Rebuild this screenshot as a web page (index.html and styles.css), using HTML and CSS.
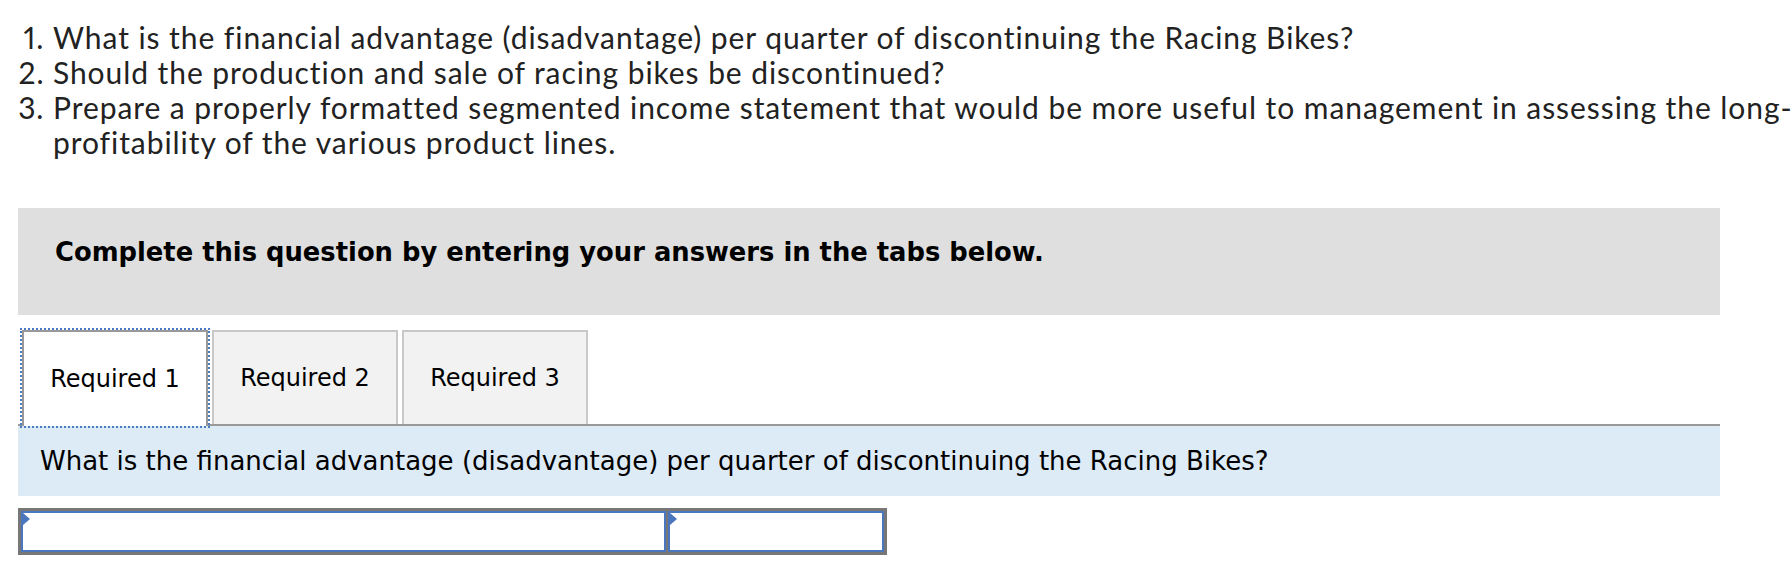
FILE: index.html
```html
<!DOCTYPE html>
<html>
<head>
<meta charset="utf-8">
<link rel="stylesheet" href="styles.css">
</head>
<body>
<ol class="questions">
  <li>What is the financial advantage (disadvantage) per quarter of discontinuing the Racing Bikes?</li>
  <li>Should the production and sale of racing bikes be discontinued?</li>
  <li>Prepare a properly formatted segmented income statement that would be more useful to management in assessing the long-term profitability of the various product lines.</li>
</ol>
<div class="instructions">Complete this question by entering your answers in the tabs below.</div>
<div class="tabs">
  <div class="tab active">Required 1</div>
  <div class="tab">Required 2</div>
  <div class="tab">Required 3</div>
</div>
<div class="prompt">What is the financial advantage (disadvantage) per quarter of discontinuing the Racing Bikes?</div>
<div class="answer">
  <div class="cell cell-label"></div>
  <div class="cell cell-value"></div>
</div>
</body>
</html>
```
FILE: styles.css
```css
html, body {
  margin: 0;
  padding: 0;
  background: #fff;
  overflow: hidden;
}
body {
  width: 1792px;
  height: 572px;
}
.questions {
  margin: 0;
  padding: 20px 0 0 53px;
  width: 1900px;
  font-family: Lato, "Liberation Sans", sans-serif;
  font-size: 30px;
  line-height: 35px;
  letter-spacing: 0.93px;
  font-variant-ligatures: none;
  color: #222;
}
.questions li::marker {
  font-variant-numeric: proportional-nums;
}
.instructions {
  margin: 48px 0 0 18px;
  width: 1702px;
  height: 107px;
  box-sizing: border-box;
  padding: 29px 0 0 37px;
  background: #dfdfdf;
  font-family: "DejaVu Sans", Verdana, sans-serif;
  font-weight: bold;
  font-size: 25.8px;
  line-height: 30px;
  color: #000;
}
.tabs {
  display: flex;
  gap: 4px;
  margin: 15px 0 0 18px;
  width: 1702px;
  box-sizing: border-box;
  padding-left: 4px;
  height: 96px;
  border-bottom: 2px solid #999;
  align-items: flex-end;
}
.tab {
  position: relative;
  width: 186px;
  height: 94px;
  box-sizing: border-box;
  border: 2px solid #c8c8c8;
  border-bottom: none;
  background: #f2f2f2;
  display: flex;
  align-items: center;
  justify-content: center;
  font-family: "DejaVu Sans", Verdana, sans-serif;
  font-size: 24px;
  color: #000;
}
.tab.active {
  background: #fff;
  border-color: #999;
  height: 96px;
  margin-bottom: -2px;
}
.tab.active::after {
  content: "";
  position: absolute;
  left: -4px;
  top: -4px;
  right: -4px;
  bottom: -2px;
  border: 2px dotted #4a7bc4;
}
.prompt {
  margin: 0 0 0 18px;
  width: 1702px;
  height: 70px;
  box-sizing: border-box;
  padding: 20px 0 0 22px;
  background: #ddebf7;
  font-family: "DejaVu Sans", Verdana, sans-serif;
  font-size: 26px;
  line-height: 30px;
  color: #000;
}
.answer {
  display: flex;
  margin: 12px 0 0 18px;
  width: 869px;
  height: 47px;
  box-sizing: border-box;
  border: 3px solid #777;
  background: #777;
  gap: 2px;
}
.cell {
  position: relative;
  box-sizing: border-box;
  background: #fff;
  border: 2px solid #4a76bd;
  height: 41px;
}
.cell::before {
  content: "";
  position: absolute;
  left: 0;
  top: 0;
  border-left: 7px solid #4a76bd;
  border-top: 6px solid transparent;
  border-bottom: 6px solid transparent;
}
.cell-label {
  width: 645px;
}
.cell-value {
  flex: 1;
}
```
